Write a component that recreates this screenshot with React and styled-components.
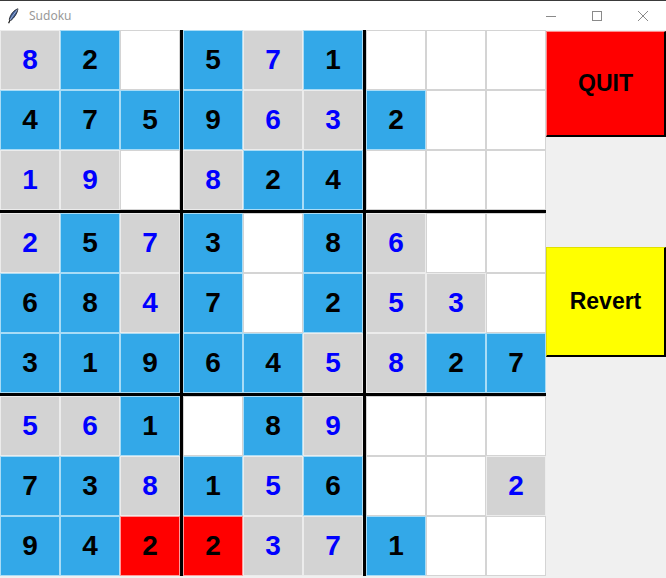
import React from 'react';
import styled, { createGlobalStyle } from 'styled-components';

const GlobalStyle = createGlobalStyle`
  html, body {
    margin: 0;
    padding: 0;
    background: #ffffff;
  }
`;

// g = user entry (grey, blue digit), b = given (blue, black digit), r = conflict
const BOARD = [
  ['8g', '2b', '', '5b', '7g', '1b', '', '', ''],
  ['4b', '7b', '5b', '9b', '6g', '3g', '2b', '', ''],
  ['1g', '9g', '', '8g', '2b', '4b', '', '', ''],
  ['2g', '5b', '7g', '3b', '', '8b', '6g', '', ''],
  ['6b', '8b', '4g', '7b', '', '2b', '5g', '3g', ''],
  ['3b', '1b', '9b', '6b', '4b', '5g', '8g', '2b', '7b'],
  ['5g', '6g', '1b', '', '8b', '9g', '', '', ''],
  ['7b', '3b', '8g', '1b', '5g', '6b', '', '', '2g'],
  ['9b', '4b', '2r', '2r', '3g', '7g', '1b', '', ''],
];

const CELL = {
  g: { bg: '#d3d3d3', fg: '#0000ff', edge: '#ececec' },
  b: { bg: '#33a8e8', fg: '#000000', edge: '#a9dcf6' },
  r: { bg: '#ff0000', fg: '#000000', edge: '#ff9a9a' },
  w: { bg: '#ffffff', fg: '#000000', edge: '#d4d4d4' },
};

const Window = styled.div`
  width: 666px;
  height: 578px;
  display: flex;
  flex-direction: column;
  overflow: hidden;
  background: #f0f0f0;
`;

const TitleBar = styled.div`
  height: 30px;
  box-sizing: border-box;
  border-top: 1px solid #3a3a3a;
  background: #ffffff;
  display: flex;
  align-items: center;
`;

const AppIcon = styled.svg`
  width: 16px;
  height: 16px;
  margin-left: 5px;
  margin-right: 8px;
`;

const Title = styled.span`
  flex: 1;
  font-family: "Noto Sans", "Open Sans", sans-serif;
  font-size: 12px;
  color: #999999;
`;

const Control = styled.div`
  width: 46px;
  height: 29px;
  display: flex;
  align-items: center;
  justify-content: center;
`;

const Main = styled.div`
  display: flex;
  flex: 1;
`;

const Board = styled.div`
  display: grid;
  grid-template-columns: repeat(3, 180px);
  grid-template-rows: repeat(3, 180px);
  gap: 3px;
  background: #000000;
  width: 546px;
  height: 546px;
`;

const Box = styled.div`
  display: grid;
  grid-template-columns: repeat(3, 60px);
  grid-template-rows: repeat(3, 60px);
`;

const Cell = styled.div`
  box-sizing: border-box;
  width: 60px;
  height: 60px;
  display: flex;
  align-items: center;
  justify-content: center;
  background: ${({ $kind }) => CELL[$kind].bg};
  color: ${({ $kind }) => CELL[$kind].fg};
  border: 1px solid ${({ $kind }) => CELL[$kind].edge};
  font-family: "Liberation Sans", Arial, sans-serif;
  font-weight: bold;
  font-size: 28px;
`;

const Side = styled.div`
  width: 120px;
  display: flex;
  flex-direction: column;
  gap: 110px;
  padding-top: 1px;
  background: #f0f0f0;
`;

const Button = styled.button`
  box-sizing: border-box;
  width: 120px;
  height: ${({ $h }) => $h}px;
  margin: 0;
  padding: 0;
  background: ${({ $bg }) => $bg};
  border-top: 1px solid ${({ $light }) => $light};
  border-left: 1px solid ${({ $light }) => $light};
  border-right: 2px solid #000000;
  border-bottom: 2px solid #000000;
  font-family: "Liberation Sans", Arial, sans-serif;
  font-weight: bold;
  font-size: 23px;
  color: #000000;
`;

function Feather() {
  return (
    <AppIcon viewBox="0 0 16 16">
      <path d="M13 0.8 C9 2 5.5 6 4.2 11.5 L6 12.4 C9.5 9.5 12.5 5 13 0.8 Z" fill="#3c5d9c" stroke="#1a1a1a" strokeWidth="0.8" />
      <path d="M12.6 1.5 C10 4.5 7.5 8 5 12" stroke="#e6ecf5" strokeWidth="0.6" fill="none" />
      <path d="M5 12 L3.6 15.2" stroke="#1a1a1a" strokeWidth="1.2" />
    </AppIcon>
  );
}

function Controls() {
  return (
    <>
      <Control>
        <svg width="10" height="10" viewBox="0 0 10 10">
          <line x1="0" y1="5.5" x2="10" y2="5.5" stroke="#8a8a8a" strokeWidth="1" />
        </svg>
      </Control>
      <Control>
        <svg width="10" height="10" viewBox="0 0 10 10">
          <rect x="0.5" y="0.5" width="9" height="9" fill="none" stroke="#8a8a8a" strokeWidth="1" />
        </svg>
      </Control>
      <Control>
        <svg width="10" height="10" viewBox="0 0 10 10">
          <path d="M0 0 L10 10 M10 0 L0 10" stroke="#8a8a8a" strokeWidth="1" />
        </svg>
      </Control>
    </>
  );
}

export default function App() {
  const boxes = [];
  for (let br = 0; br < 3; br++) {
    for (let bc = 0; bc < 3; bc++) {
      const cells = [];
      for (let r = 0; r < 3; r++) {
        for (let c = 0; c < 3; c++) {
          const v = BOARD[br * 3 + r][bc * 3 + c];
          const kind = v ? v[1] : 'w';
          cells.push(
            <Cell key={`${r}-${c}`} $kind={kind}>
              {v ? v[0] : ''}
            </Cell>
          );
        }
      }
      boxes.push(<Box key={`${br}-${bc}`}>{cells}</Box>);
    }
  }

  return (
    <>
      <GlobalStyle />
      <Window>
        <TitleBar>
          <Feather />
          <Title>Sudoku</Title>
          <Controls />
        </TitleBar>
        <Main>
          <Board>{boxes}</Board>
          <Side>
            <Button $h={106} $bg="#ff0000" $light="#ff8c8c">QUIT</Button>
            <Button $h={110} $bg="#ffff00" $light="#e0e000">Revert</Button>
          </Side>
        </Main>
      </Window>
    </>
  );
}
